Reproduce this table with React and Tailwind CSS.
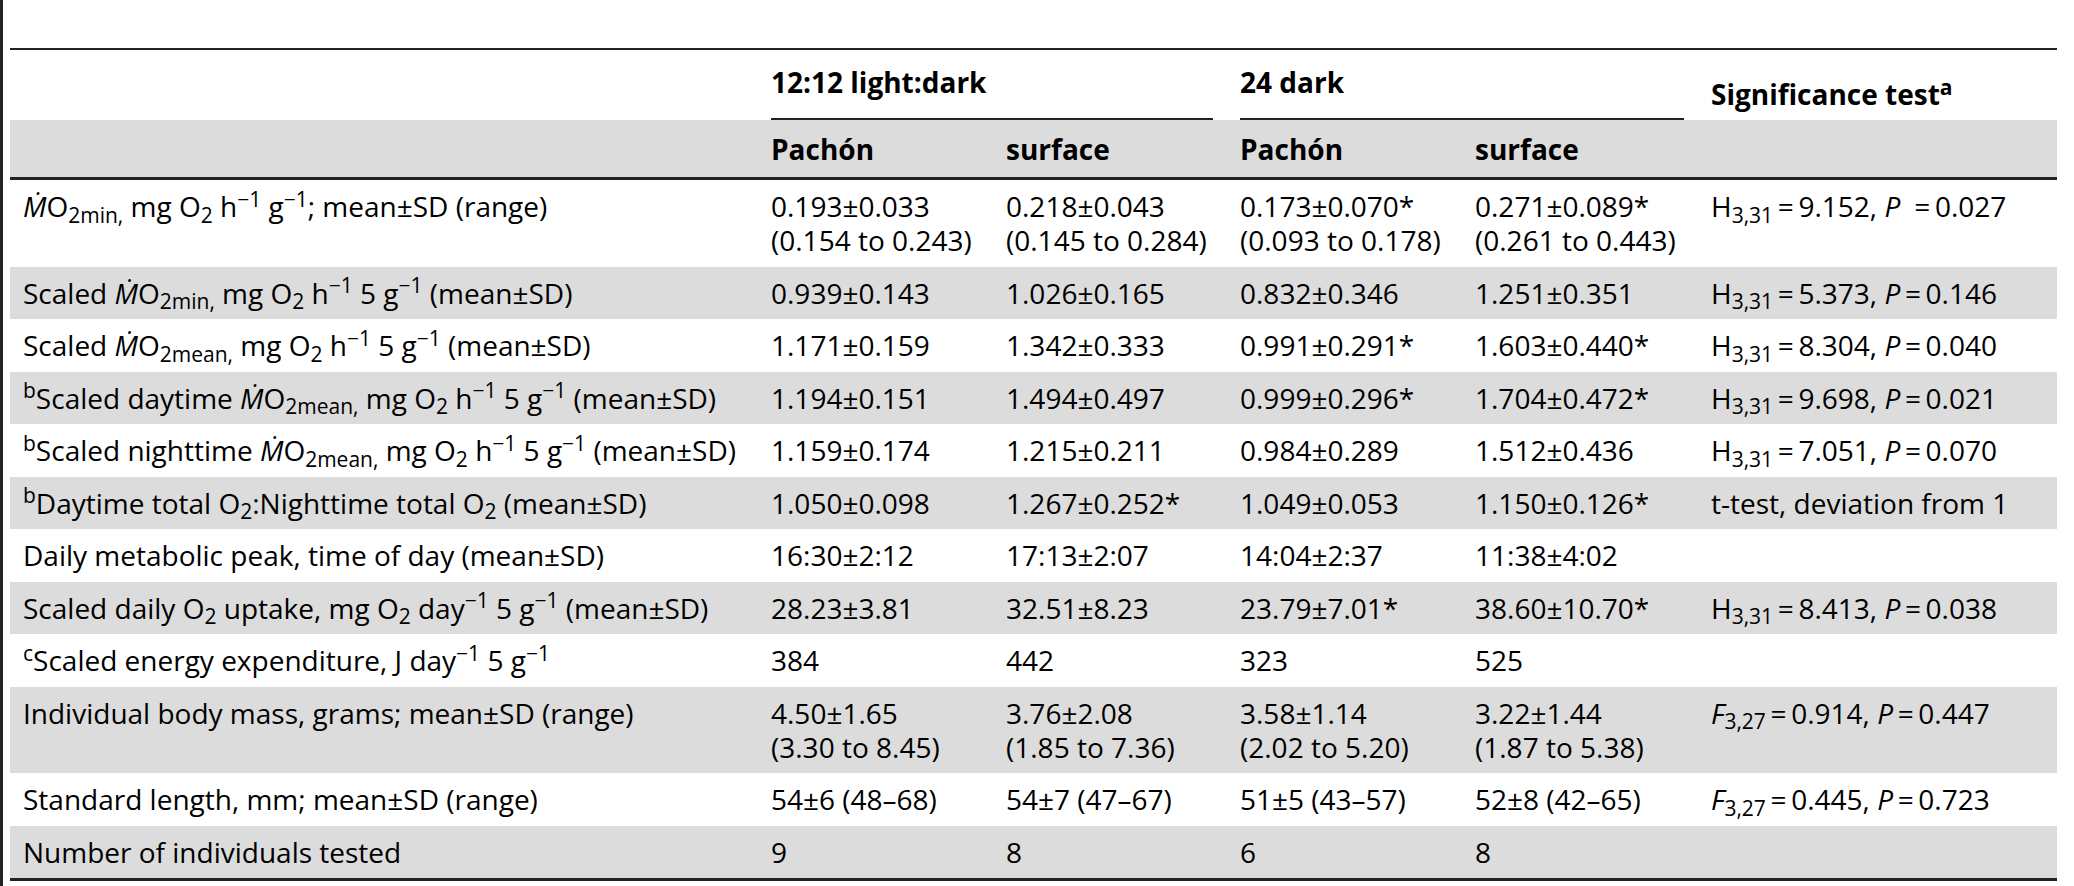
import React from 'react';

const cols = 'grid grid-cols-[748px_235px_234px_235px_236px_359px]';

const Dot = () => <i>Ṁ</i>;
const Inv = () => <sup>−1</sup>;

const H = ({ v, p, sp }) => (
  <span>
    H<sub>3,31</sub>{'\u2009'}={'\u2009'}{v}, <i>P</i>{sp ? '\u2002' : '\u2009'}={'\u2009'}{p}
  </span>
);

const F = ({ v, p }) => (
  <span>
    <i>F</i><sub>3,27</sub>{'\u2009'}={'\u2009'}{v}, <i>P</i>{'\u2009'}={'\u2009'}{p}
  </span>
);

const rows = [
  {
    label: (
      <>
        <Dot />O<sub>2min,</sub> mg O<sub>2</sub> h<Inv /> g<Inv />; mean±SD (range)
      </>
    ),
    vals: [
      ['0.193±0.033', '(0.154 to 0.243)'],
      ['0.218±0.043', '(0.145 to 0.284)'],
      ['0.173±0.070*', '(0.093 to 0.178)'],
      ['0.271±0.089*', '(0.261 to 0.443)'],
    ],
    test: <H v="9.152" p="0.027" sp />,
  },
  {
    label: (
      <>
        Scaled <Dot />O<sub>2min,</sub> mg O<sub>2</sub> h<Inv /> 5 g<Inv /> (mean±SD)
      </>
    ),
    vals: ['0.939±0.143', '1.026±0.165', '0.832±0.346', '1.251±0.351'],
    test: <H v="5.373" p="0.146" />,
  },
  {
    label: (
      <>
        Scaled <Dot />O<sub>2mean,</sub> mg O<sub>2</sub> h<Inv /> 5 g<Inv /> (mean±SD)
      </>
    ),
    vals: ['1.171±0.159', '1.342±0.333', '0.991±0.291*', '1.603±0.440*'],
    test: <H v="8.304" p="0.040" />,
  },
  {
    label: (
      <>
        <sup>b</sup>Scaled daytime <Dot />O<sub>2mean,</sub> mg O<sub>2</sub> h<Inv /> 5 g<Inv /> (mean±SD)
      </>
    ),
    vals: ['1.194±0.151', '1.494±0.497', '0.999±0.296*', '1.704±0.472*'],
    test: <H v="9.698" p="0.021" />,
  },
  {
    label: (
      <>
        <sup>b</sup>Scaled nighttime <Dot />O<sub>2mean,</sub> mg O<sub>2</sub> h<Inv /> 5 g<Inv /> (mean±SD)
      </>
    ),
    vals: ['1.159±0.174', '1.215±0.211', '0.984±0.289', '1.512±0.436'],
    test: <H v="7.051" p="0.070" />,
  },
  {
    label: (
      <>
        <sup>b</sup>Daytime total O<sub>2</sub>:Nighttime total O<sub>2</sub> (mean±SD)
      </>
    ),
    vals: ['1.050±0.098', '1.267±0.252*', '1.049±0.053', '1.150±0.126*'],
    test: 't-test, deviation from 1',
  },
  {
    label: 'Daily metabolic peak, time of day (mean±SD)',
    vals: ['16:30±2:12', '17:13±2:07', '14:04±2:37', '11:38±4:02'],
    test: '',
  },
  {
    label: (
      <>
        Scaled daily O<sub>2</sub> uptake, mg O<sub>2</sub> day<Inv /> 5 g<Inv /> (mean±SD)
      </>
    ),
    vals: ['28.23±3.81', '32.51±8.23', '23.79±7.01*', '38.60±10.70*'],
    test: <H v="8.413" p="0.038" />,
  },
  {
    label: (
      <>
        <sup>c</sup>Scaled energy expenditure, J day<Inv /> 5 g<Inv />
      </>
    ),
    vals: ['384', '442', '323', '525'],
    test: '',
  },
  {
    label: 'Individual body mass, grams; mean±SD (range)',
    vals: [
      ['4.50±1.65', '(3.30 to 8.45)'],
      ['3.76±2.08', '(1.85 to 7.36)'],
      ['3.58±1.14', '(2.02 to 5.20)'],
      ['3.22±1.44', '(1.87 to 5.38)'],
    ],
    test: <F v="0.914" p="0.447" />,
  },
  {
    label: 'Standard length, mm; mean±SD (range)',
    vals: ['54±6 (48–68)', '54±7 (47–67)', '51±5 (43–57)', '52±8 (42–65)'],
    test: <F v="0.445" p="0.723" />,
  },
  {
    label: 'Number of individuals tested',
    vals: ['9', '8', '6', '8'],
    test: '',
  },
];

function Cell({ children }) {
  return <div className="px-[13px] py-[9.25px] leading-[34px] whitespace-nowrap">{children}</div>;
}

export default function App() {
  return (
    <div
      className="h-[886px] w-[2074px] overflow-hidden bg-white border-l-[3px] border-[#222] pt-[48px] pl-[7px] text-[28px] text-black"
      style={{ fontFamily: '"Open Sans", "Noto Sans", sans-serif' }}
    >
      <div className="w-[2047px] border-t-2 border-[#222]">
        {/* header row 1 */}
        <div className={`${cols} h-[70px] font-bold`}>
          <div />
          <div className="col-span-2 px-[13px] pr-[14px]">
            <div className="h-full border-b-2 border-[#222] pt-[15px] leading-[34px]">12:12 light:dark</div>
          </div>
          <div className="col-span-2 px-[13px] pr-[14px]">
            <div className="h-full border-b-2 border-[#222] pt-[15px] leading-[34px]">24 dark</div>
          </div>
          <div className="px-[13px] pt-[27px] leading-[34px] whitespace-nowrap">
            Significance test<sup>a</sup>
          </div>
        </div>
        {/* header row 2 */}
        <div className={`${cols} h-[60px] items-center bg-[#dcdcdc] font-bold border-b-[3px] border-[#222]`}>
          <div />
          <div className="px-[13px]">Pachón</div>
          <div className="px-[13px]">surface</div>
          <div className="px-[13px]">Pachón</div>
          <div className="px-[13px]">surface</div>
          <div />
        </div>
        {rows.map((r, i) => (
          <div key={i} className={`${cols} ${i % 2 === 1 ? 'bg-[#dcdcdc]' : 'bg-white'}`}>
            <Cell>{r.label}</Cell>
            {r.vals.map((v, j) => (
              <Cell key={j}>
                {Array.isArray(v) ? (
                  <>
                    <div>{v[0]}</div>
                    <div>{v[1]}</div>
                  </>
                ) : (
                  v
                )}
              </Cell>
            ))}
            <Cell>{r.test}</Cell>
          </div>
        ))}
        <div className="border-t-[3px] border-[#222]" />
      </div>
    </div>
  );
}
